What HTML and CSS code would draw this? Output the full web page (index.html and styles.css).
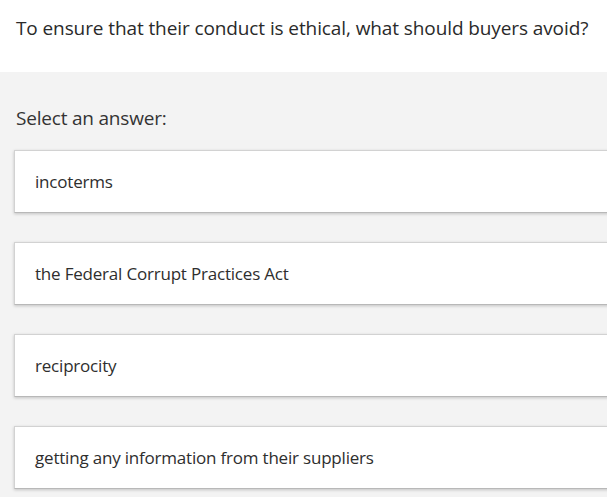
FILE: index.html
```html
<!DOCTYPE html>
<html>
<head>
<meta charset="utf-8">
<link rel="stylesheet" href="styles.css">
</head>
<body>
<header class="question">
  <p class="question-text">To ensure that their conduct is ethical, what should buyers avoid?</p>
</header>
<main class="answers">
  <p class="prompt">Select an answer:</p>
  <ul class="options">
    <li class="option">incoterms</li>
    <li class="option">the Federal Corrupt Practices Act</li>
    <li class="option">reciprocity</li>
    <li class="option">getting any information from their suppliers</li>
  </ul>
</main>
</body>
</html>
```

FILE: styles.css
```css
html, body {
  margin: 0;
  padding: 0;
  background: #f3f3f3;
  overflow: hidden;
}
body {
  font-family: "Open Sans", "Noto Sans", sans-serif;
  color: #2a2a2a;
  width: 607px;
  height: 497px;
}
.question {
  background: #ffffff;
  height: 72px;
  padding: 0 16px;
  box-sizing: border-box;
}
.question-text {
  margin: 0;
  padding-top: 14px;
  font-size: 19px;
  line-height: 28px;
  letter-spacing: -0.1px;
  white-space: nowrap;
}
.answers {
  padding: 32px 0 0 14px;
}
.prompt {
  margin: 0 0 0 2px;
  font-size: 19px;
  line-height: 28px;
  letter-spacing: -0.2px;
  color: #333333;
}
.options {
  list-style: none;
  margin: 18px -20px 0 0;
  padding: 0;
  display: flex;
  flex-direction: column;
  gap: 29px;
}
.option {
  background: #ffffff;
  border: 1px solid #d2d2d2;
  border-bottom-color: #b8b8b8;
  box-shadow: 0 1px 3px rgba(0,0,0,0.2);
  height: 63px;
  box-sizing: border-box;
  padding: 0 20px;
  display: flex;
  align-items: center;
  font-size: 17px;
  letter-spacing: -0.2px;
  color: #2e2e2e;
}
```
